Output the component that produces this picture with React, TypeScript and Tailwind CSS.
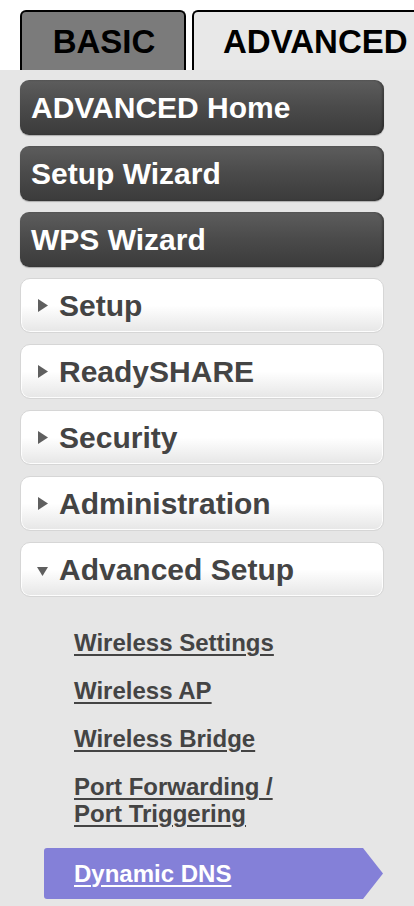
import React from "react";

const font = { fontFamily: '"Liberation Sans", Arial, Helvetica, sans-serif' };

function DarkItem({ label }: { label: string }) {
  return (
    <div className="flex h-[55px] w-[364px] items-center rounded-[9px] bg-linear-to-b from-[#5d5d5d] via-[#4a4a4a] to-[#3b3b3b] pl-[11px] shadow-[0_1px_1px_rgba(0,0,0,0.25),inset_-2px_0_2px_rgba(0,0,0,0.25)]">
      <span className="text-[30px] font-bold leading-none text-white">{label}</span>
    </div>
  );
}

function Arrow({ open }: { open?: boolean }) {
  return (
    <div className="flex w-[11px] items-center">
      {open ? (
        <svg width="11" height="9" viewBox="0 0 11 9" className="mt-[4px]">
          <path d="M0 0 L11 0 L5.5 9 Z" fill="#5f5f5f" />
        </svg>
      ) : (
        <svg width="10" height="13" viewBox="0 0 10 13" className="ml-[1px]">
          <path d="M0 0 L10 6.5 L0 13 Z" fill="#5f5f5f" />
        </svg>
      )}
    </div>
  );
}

function LightItem({ label, open }: { label: string; open?: boolean }) {
  return (
    <div className="flex h-[55px] w-[364px] items-center gap-[11px] rounded-[10px] border border-[#d6d6d6] bg-linear-to-b from-white via-white to-[#e6e6e6] pl-[16px] shadow-[inset_0_0_0_1px_rgba(255,255,255,0.9)]">
      <Arrow open={open} />
      <span className="text-[30px] font-bold leading-none text-[#444]">{label}</span>
    </div>
  );
}

function SubLink({ children }: { children: React.ReactNode }) {
  return (
    <span className="text-[24px] font-bold leading-[27px] text-[#444] underline decoration-2 underline-offset-[3px]">
      {children}
    </span>
  );
}

export default function App() {
  return (
    <div className="h-[906px] w-[414px] overflow-hidden bg-white" style={font}>
      {/* Tabs */}
      <div className="flex h-[70px] items-end overflow-hidden">
        <div className="ml-[20px] flex h-[60px] w-[166px] shrink-0 items-center justify-center rounded-t-[6px] border-2 border-b-0 border-black bg-[#7b7b7b] pl-[2px]">
          <span className="text-[33px] font-bold leading-none text-black">BASIC</span>
        </div>
        <div className="ml-[6px] flex h-[60px] w-[260px] shrink-0 items-center rounded-tl-[6px] border-l-2 border-t-2 border-black bg-[#e8e8e8] pl-[29px]">
          <span className="whitespace-nowrap text-[33px] font-bold leading-none text-black">ADVANCED</span>
        </div>
      </div>

      {/* Menu panel */}
      <div className="h-[836px] bg-[#e6e6e6] px-[20px] pt-[10px]">
        <div className="flex flex-col gap-[11px]">
          <DarkItem label="ADVANCED Home" />
          <DarkItem label="Setup Wizard" />
          <DarkItem label="WPS Wizard" />
          <LightItem label="Setup" />
          <LightItem label="ReadySHARE" />
          <LightItem label="Security" />
          <LightItem label="Administration" />
          <LightItem label="Advanced Setup" open />
        </div>

        <div className="ml-[24px] mt-[21px] flex w-[339px] flex-col">
          <div className="flex h-[48px] items-center pl-[30px]">
            <SubLink>Wireless Settings</SubLink>
          </div>
          <div className="flex h-[48px] items-center pl-[30px]">
            <SubLink>Wireless AP</SubLink>
          </div>
          <div className="flex h-[48px] items-center pl-[30px]">
            <SubLink>Wireless Bridge</SubLink>
          </div>
          <div className="flex h-[75px] flex-col justify-center pl-[30px]">
            <SubLink>
              Port Forwarding /
              <br />
              Port Triggering
            </SubLink>
          </div>
          <div className="mt-[11px] flex h-[51px] items-center rounded-l-[3px] bg-[#8480d8] pl-[30px] [clip-path:polygon(0_0,calc(100%-20px)_0,100%_50%,calc(100%-20px)_100%,0_100%)]">
            <span className="text-[24px] font-bold leading-none text-white underline decoration-2 underline-offset-[3px]">
              Dynamic DNS
            </span>
          </div>
        </div>
      </div>
    </div>
  );
}
